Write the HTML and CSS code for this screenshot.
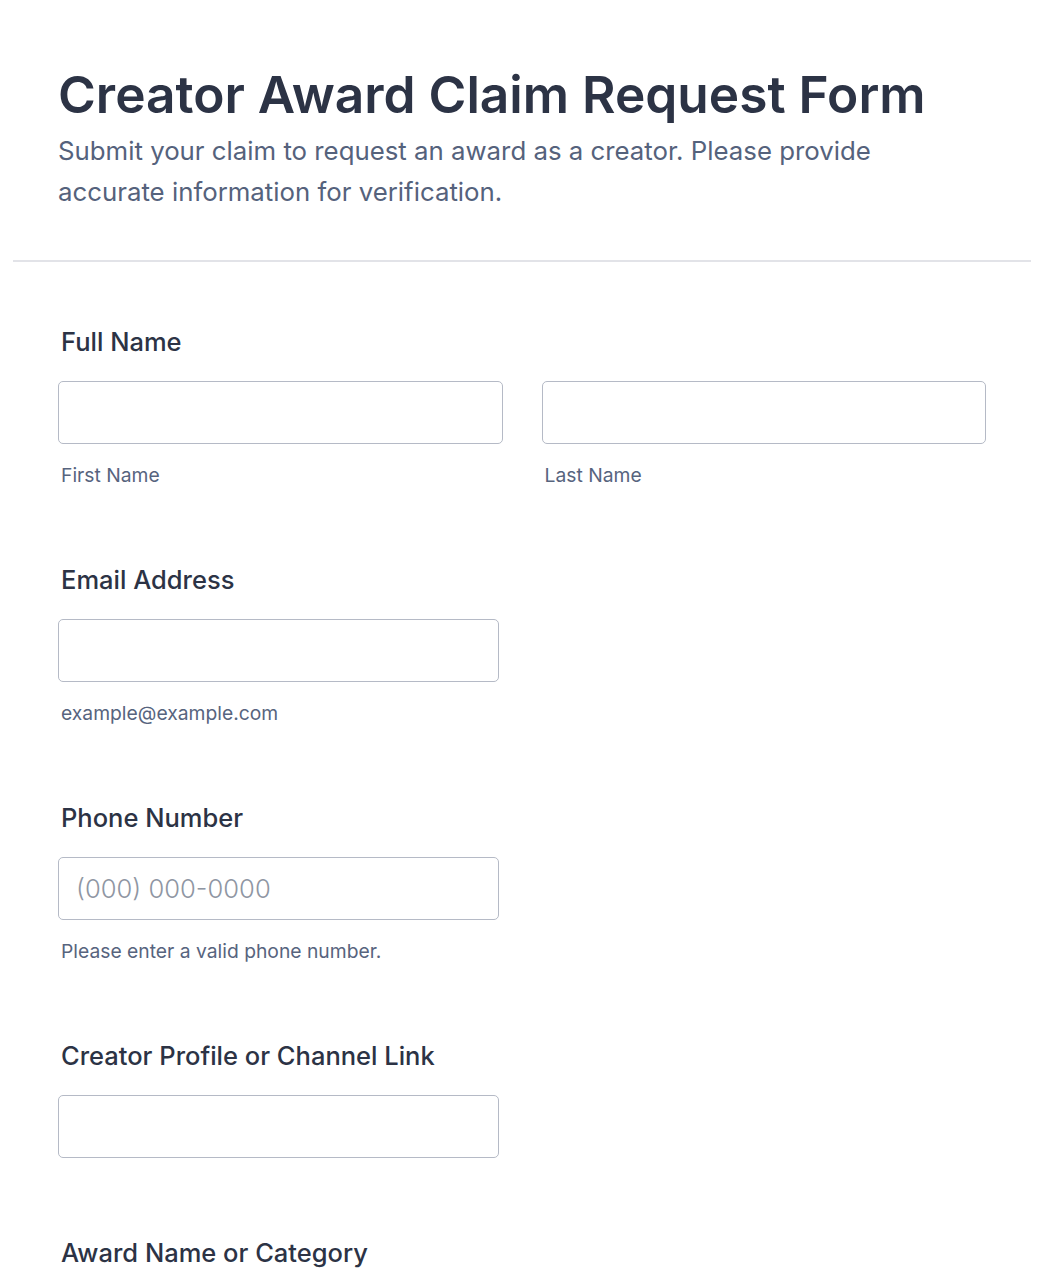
FILE: index.html
```html
<!DOCTYPE html>
<html lang="en">

<head>
    <meta charset="UTF-8">
    <meta name="viewport" content="width=device-width, initial-scale=1.0">
    <title>Creator Award Claim Request Form</title>
    <link rel="stylesheet" href="styles.css">
</head>

<body>
    <form class="form">
        <div class="header">
            <h1>Creator Award Claim Request Form</h1>
            <p>Submit your claim to request an award as a creator. Please provide accurate information for verification.</p>
        </div>

        <div class="fields">
            <div class="field">
                <label class="label">Full Name</label>
                <div class="row">
                    <div class="col">
                        <input class="input" type="text">
                        <span class="sub">First Name</span>
                    </div>
                    <div class="col">
                        <input class="input" type="text">
                        <span class="sub">Last Name</span>
                    </div>
                </div>
            </div>

            <div class="field">
                <label class="label">Email Address</label>
                <div class="col half">
                    <input class="input" type="email">
                    <span class="sub">example@example.com</span>
                </div>
            </div>

            <div class="field">
                <label class="label">Phone Number</label>
                <div class="col half">
                    <input class="input" type="tel" placeholder="(000) 000-0000">
                    <span class="sub">Please enter a valid phone number.</span>
                </div>
            </div>

            <div class="field">
                <label class="label">Creator Profile or Channel Link</label>
                <div class="col half">
                    <input class="input" type="text">
                </div>
            </div>

            <div class="field">
                <label class="label">Award Name or Category</label>
            </div>
        </div>
    </form>
</body>

</html>
```

FILE: styles.css
```css
* {
    margin: 0;
    padding: 0;
    box-sizing: border-box;
}

body {
    font-family: Inter, "Noto Sans", sans-serif;
    color: #2c3345;
    background: #fff;
}

.form {
    margin: 0 13px;
}

.header {
    padding: 62px 45px 48px;
    border-bottom: 2px solid #e2e3e8;
}

.header h1 {
    font-size: 51.4px;
    font-weight: 600;
    line-height: 64px;
    color: #2c3345;
}

.header p {
    margin-top: 4px;
    font-size: 25.8px;
    line-height: 41px;
    color: #55627c;
    max-width: 880px;
}

.fields {
    padding: 65px 45px 0;
}

.field {
    margin-bottom: 80px;
}

.label {
    display: block;
    font-size: 25.5px;
    font-weight: 500;
    line-height: 30px;
    padding-left: 3px;
    margin-bottom: 24px;
}

.row {
    display: flex;
    gap: 39px;
}

.col {
    display: flex;
    flex-direction: column;
    flex: 1;
}

.col.half {
    width: 441px;
}

.input {
    height: 63px;
    width: 100%;
    border: 1px solid #b5bac6;
    border-radius: 5px;
    padding: 0 17px;
    font-family: inherit;
    font-size: 25.6px;
    color: #2c3345;
    background: #fff;
    outline: none;
}

.input::placeholder {
    color: #8f96a3;
    font-weight: 300;
}

.sub {
    display: block;
    font-size: 19.3px;
    line-height: 20px;
    margin-top: 21px;
    padding-left: 3px;
    color: #57647e;
}
```
